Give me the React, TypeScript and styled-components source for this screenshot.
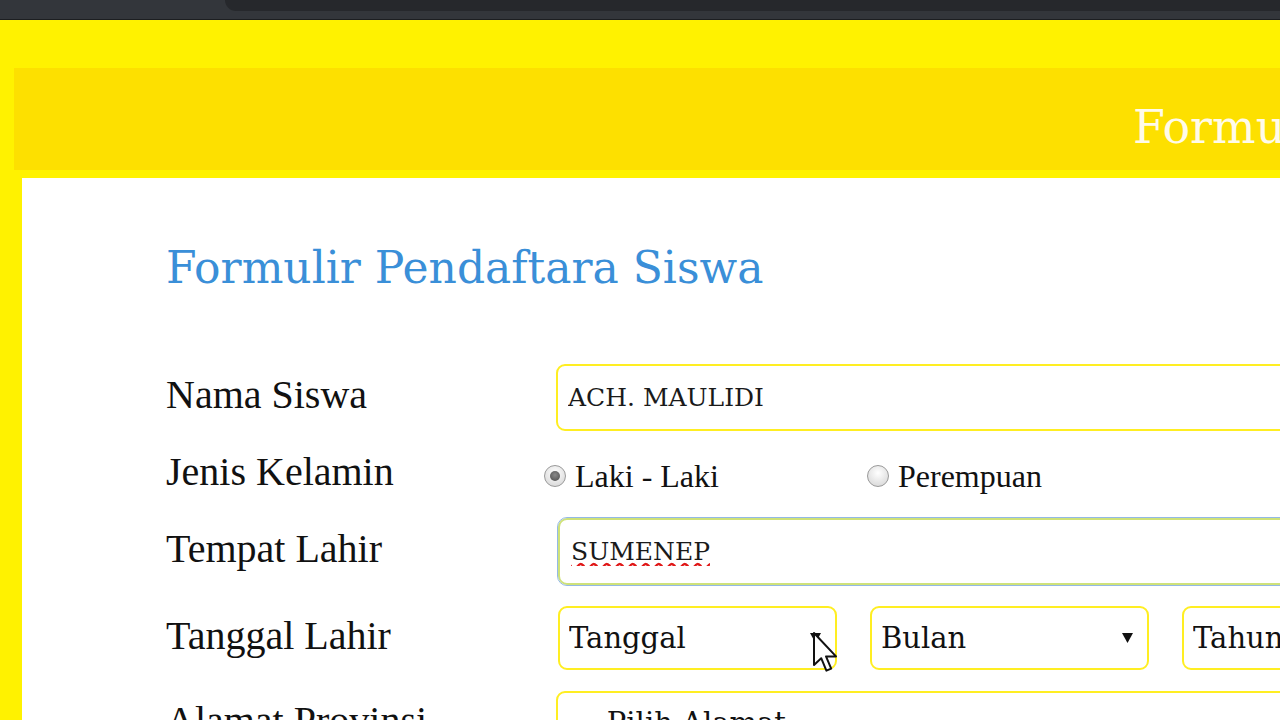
import React from 'react';
import styled, { createGlobalStyle } from 'styled-components';

const GlobalStyle = createGlobalStyle`
  html, body {
    margin: 0;
    padding: 0;
    overflow: hidden;
    background: #fff200;
  }
`;

const Page = styled.div`
  position: relative;
  width: 1280px;
  height: 720px;
  overflow: hidden;
  background: #fff200;
`;

const BrowserBar = styled.div`
  height: 19px;
  background: #33363b;
  border-bottom: 1px solid #1c1e21;
`;

const BarTab = styled.div`
  margin-left: 225px;
  height: 11px;
  background: #26282c;
  border-bottom-left-radius: 12px;
`;

const Frame = styled.div`
  padding: 48px 0 0 14px;
`;

const HeaderBand = styled.div`
  height: 102px;
  box-sizing: border-box;
  background: #fde000;
  padding: 36px 0 0 1119px;
  white-space: nowrap;
  overflow: hidden;
`;

const HeaderText = styled.h1`
  margin: 0;
  font-family: "DejaVu Serif", serif;
  font-weight: normal;
  font-size: 46px;
  line-height: 46px;
  color: #fffbea;
`;

const Panel = styled.div`
  margin: 8px 0 0 8px;
  width: 1600px;
  min-height: 600px;
  background: #ffffff;
  padding: 64px 0 0 144px;
  box-sizing: border-box;
`;

const Title = styled.h2`
  margin: 0;
  font-family: "DejaVu Serif", serif;
  font-weight: normal;
  font-size: 44px;
  line-height: 1.2;
  color: #3a8fd8;
`;

const Form = styled.form`
  margin-top: 69px;
  display: grid;
  grid-template-columns: 390px 1000px;
  row-gap: 21px;
  align-items: center;
`;

const Label = styled.label`
  font-family: "Liberation Serif", "Times New Roman", serif;
  font-size: 40px;
  line-height: 1;
  color: #111;
  padding-bottom: 4px;
`;

const TextField = styled.input<{ $focused?: boolean }>`
  box-sizing: border-box;
  width: 1000px;
  height: 67px;
  margin-left: ${(p) => (p.$focused ? '2px' : '0')};
  padding: 0 0 0 ${(p) => (p.$focused ? '11px' : '10px')};
  border: 2px solid ${(p) => (p.$focused ? '#cfe27a' : '#ffee22')};
  outline: ${(p) => (p.$focused ? '1px solid #93b9e6' : 'none')};
  border-radius: 9px;
  font-family: "DejaVu Serif", serif;
  font-size: 25px;
  color: #1a1a1a;
  background: #fff;
  text-decoration: ${(p) => (p.$focused ? 'underline wavy #e01818' : 'none')};
  text-underline-offset: 3px;
`;

const RadioGroup = styled.div`
  box-sizing: border-box;
  height: 45px;
  margin-left: -12px;
  display: flex;
  align-items: center;
  padding-top: 4px;
`;

const RadioOption = styled.label`
  width: 323px;
  display: flex;
  align-items: center;
  gap: 9px;
  font-family: "Liberation Serif", "Times New Roman", serif;
  font-size: 32px;
  color: #111;
`;

const Radio = styled.input`
  appearance: none;
  margin: 0;
  width: 22px;
  height: 22px;
  border-radius: 50%;
  border: 1px solid #9a9a9a;
  background: radial-gradient(circle at 50% 35%, #ffffff 0%, #d2d2d2 100%);
  box-sizing: border-box;
  display: grid;
  place-items: center;

  &:checked::after {
    content: '';
    width: 10px;
    height: 10px;
    border-radius: 50%;
    background: radial-gradient(circle at 50% 40%, #8a8a8a 0%, #4a4a4a 100%);
  }
`;

const SelectRow = styled.div`
  display: flex;
  gap: 33px;
  margin-left: 2px;
`;

const SelectBox = styled.div<{ $wide?: boolean }>`
  box-sizing: border-box;
  width: ${(p) => (p.$wide ? '1000px' : '279px')};
  height: 64px;
  border: 2px solid #ffee22;
  border-radius: 9px;
  background: #fff;
  display: flex;
  align-items: center;
  padding-right: 14px;
`;

const Select = styled.select<{ $indent?: boolean }>`
  appearance: none;
  flex: 1;
  height: 100%;
  border: none;
  outline: none;
  background: transparent;
  padding-left: ${(p) => (p.$indent ? '20px' : '9px')};
  font-family: "DejaVu Serif", serif;
  font-size: 29px;
  color: #111;
`;

const Arrow = styled.svg`
  width: 11px;
  height: 11px;
  flex: none;
`;

const Cursor = styled.svg`
  position: absolute;
  left: 812px;
  top: 631px;
  width: 26px;
  height: 44px;
`;

function SelectField({ value, wide }: { value: string; wide?: boolean }) {
  return (
    <SelectBox $wide={wide}>
      <Select defaultValue={value} $indent={wide}>
        <option>{value}</option>
      </Select>
      <Arrow viewBox="0 0 11 11">
        <polygon points="0,1 11,1 5.5,11" fill="#111" />
      </Arrow>
    </SelectBox>
  );
}

export default function App() {
  return (
    <Page>
      <GlobalStyle />
      <BrowserBar>
        <BarTab />
      </BrowserBar>
      <Frame>
        <HeaderBand>
          <HeaderText>Formulir Pendaftaran Siswa Baru</HeaderText>
        </HeaderBand>
        <Panel>
          <Title>Formulir Pendaftara Siswa</Title>
          <Form>
            <Label>Nama Siswa</Label>
            <TextField defaultValue="ACH. MAULIDI" />

            <Label>Jenis Kelamin</Label>
            <RadioGroup>
              <RadioOption>
                <Radio type="radio" name="jk" defaultChecked />
                Laki - Laki
              </RadioOption>
              <RadioOption>
                <Radio type="radio" name="jk" />
                Perempuan
              </RadioOption>
            </RadioGroup>

            <Label>Tempat Lahir</Label>
            <TextField $focused defaultValue="SUMENEP" />

            <Label>Tanggal Lahir</Label>
            <SelectRow>
              <SelectField value="Tanggal" />
              <SelectField value="Bulan" />
              <SelectField value="Tahun" />
            </SelectRow>

            <Label>Alamat Provinsi</Label>
            <SelectField value="-- Pilih Alamat --" wide />
          </Form>
        </Panel>
      </Frame>
      <Cursor viewBox="0 0 13 22">
        <path
          d="M1 1 L1 17 L4.6 13.6 L7.2 19.8 L9.6 18.8 L7 12.7 L12 12.7 Z"
          fill="#fff"
          stroke="#111"
          strokeWidth="1"
          strokeLinejoin="round"
        />
      </Cursor>
    </Page>
  );
}
